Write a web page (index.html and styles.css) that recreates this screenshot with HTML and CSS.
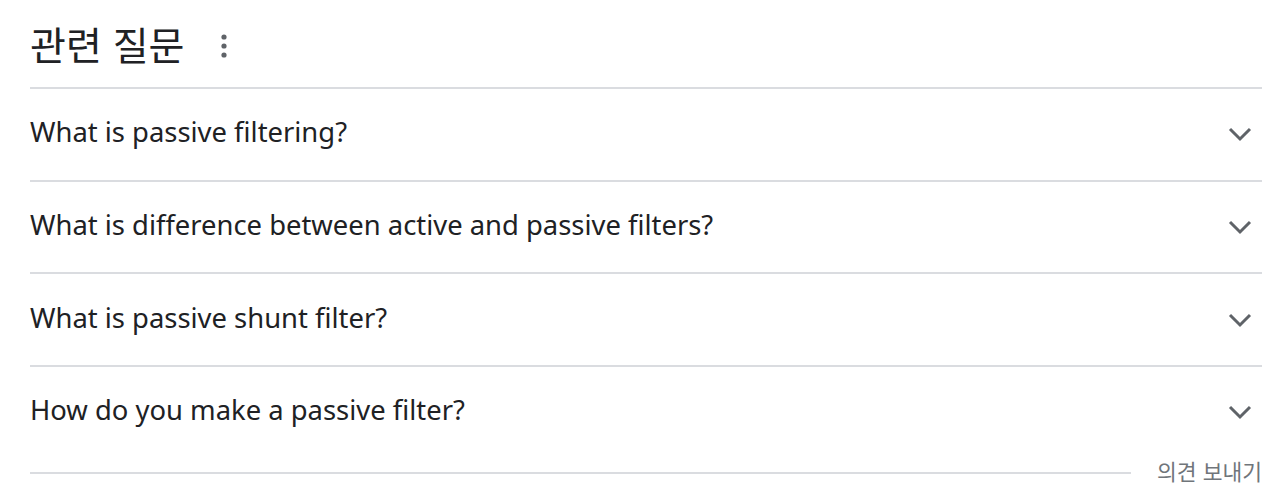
FILE: index.html
```html
<!DOCTYPE html>
<html lang="ko">
<head>
<meta charset="utf-8">
<link rel="stylesheet" href="styles.css">
</head>
<body>
<div class="wrap">
  <div class="header">
    <h2 class="title">관련 질문</h2>
    <span class="more" aria-label="더보기">
      <svg width="8" height="24" viewBox="0 0 8 24"><circle cx="4" cy="3" r="2.6" fill="#5f6368"/><circle cx="4" cy="12" r="2.6" fill="#5f6368"/><circle cx="4" cy="21" r="2.6" fill="#5f6368"/></svg>
    </span>
  </div>
  <div class="list">
    <div class="item"><span class="q">What is passive filtering?</span><svg class="chev" width="24" height="16" viewBox="0 0 24 16"><path d="M2 3 L12 13 L22 3" fill="none" stroke="#5f6368" stroke-width="3"/></svg></div>
    <div class="item"><span class="q">What is difference between active and passive filters?</span><svg class="chev" width="24" height="16" viewBox="0 0 24 16"><path d="M2 3 L12 13 L22 3" fill="none" stroke="#5f6368" stroke-width="3"/></svg></div>
    <div class="item"><span class="q">What is passive shunt filter?</span><svg class="chev" width="24" height="16" viewBox="0 0 24 16"><path d="M2 3 L12 13 L22 3" fill="none" stroke="#5f6368" stroke-width="3"/></svg></div>
    <div class="item"><span class="q">How do you make a passive filter?</span><svg class="chev" width="24" height="16" viewBox="0 0 24 16"><path d="M2 3 L12 13 L22 3" fill="none" stroke="#5f6368" stroke-width="3"/></svg></div>
  </div>
  <div class="footer">
    <div class="fline"></div>
    <span class="feedback">의견 보내기</span>
  </div>
</div>
</body>
</html>
```
FILE: styles.css
```css
html, body { margin: 0; padding: 0; background: #fff; }
body { font-family: "Noto Sans", "Noto Sans CJK KR", sans-serif; color: #202124; }
.wrap { padding: 0 18px 0 30px; }
.header { display: flex; align-items: center; height: 87px; }
.title { margin: 0; font-size: 39px; font-weight: 400; line-height: 1; color: #202124; font-family: "Noto Sans CJK KR", sans-serif; }
.more { display: flex; margin-left: 36px; margin-top: 4px; }
.list { border-top: 2px solid #dadce0; }
.item { display: flex; align-items: center; justify-content: space-between; height: 90.67px; border-bottom: 2px solid #dadce0; }
.item:last-child { border-bottom: none; }
.q { font-size: 27.4px; color: #202124; margin-top: -5px; }
.chev { margin-right: 10px; margin-top: 0; }
.footer { display: flex; align-items: center; height: 28px; margin-top: 1px; }
.fline { flex: 1; border-top: 2px solid #dadce0; margin-right: 26px; }
.feedback { font-size: 21.5px; color: #70757a; font-family: "Noto Sans CJK KR", sans-serif; margin-top: -4px; }
```
